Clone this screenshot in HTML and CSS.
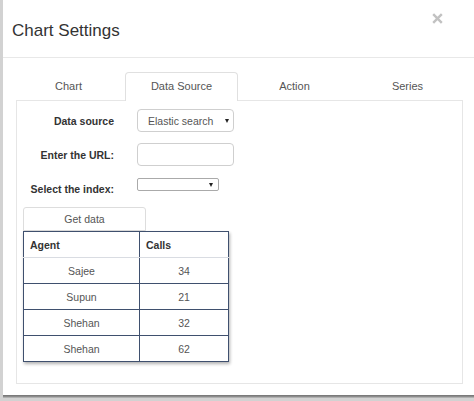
FILE: index.html
```html
<!DOCTYPE html>
<html lang="en">
<head>
<meta charset="utf-8">
<title>Chart Settings</title>
<link rel="stylesheet" href="styles.css">
</head>
<body>
<div class="modal">
  <div class="modal-header">
    <h4 class="title">Chart Settings</h4>
    <button class="close" aria-label="Close">
      <svg width="11" height="11" viewBox="0 0 11 11"><path d="M1.2 1.2 L9.8 9.8 M9.8 1.2 L1.2 9.8" stroke="#c2c2c2" stroke-width="2.4" stroke-linecap="butt"/></svg>
    </button>
  </div>
  <div class="modal-body">
    <ul class="tabs">
      <li class="tab">Chart</li>
      <li class="tab active">Data Source</li>
      <li class="tab">Action</li>
      <li class="tab">Series</li>
    </ul>
    <div class="panel">
      <div class="form">
        <label class="lbl">Data source</label>
        <div class="sel sel-lg"><span class="sel-text">Elastic search</span><span class="caret"></span></div>
        <label class="lbl">Enter the URL:</label>
        <input class="input" type="text">
        <label class="lbl lbl-low">Select the index:</label>
        <div class="sel sel-sm"><span class="sel-text"></span><span class="caret"></span></div>
      </div>
      <button class="btn">Get data</button>
      <table class="grid">
        <thead>
          <tr><th class="c1">Agent</th><th class="c2">Calls</th></tr>
        </thead>
        <tbody>
          <tr><td>Sajee</td><td>34</td></tr>
          <tr><td>Supun</td><td>21</td></tr>
          <tr><td>Shehan</td><td>32</td></tr>
          <tr><td>Shehan</td><td>62</td></tr>
        </tbody>
      </table>
    </div>
  </div>
</div>
</body>
</html>
```
FILE: styles.css
```css
html, body {
  margin: 0;
  padding: 0;
  height: 100%;
}
body {
  background: #d2d2d2;
  font-family: "Liberation Sans", Arial, sans-serif;
  overflow: hidden;
}
.modal {
  margin-left: 3px;
  width: 471px;
  height: 395px;
  background: #fff;
  box-shadow: 0 1px 0 #7a7a7a, 0 2px 0 #8c8c8c, 0 3px 0 #b0b0b0;
}
.modal-header {
  display: flex;
  justify-content: space-between;
  align-items: flex-start;
  height: 58px;
  box-sizing: border-box;
  border-bottom: 1px solid #e8e8e8;
}
.title {
  margin: 0;
  padding: 21px 0 0 9px;
  font-size: 17px;
  line-height: 20px;
  font-weight: normal;
  color: #333;
}
.close {
  margin: 13px 31px 0 0;
  padding: 0;
  width: 11px;
  height: 11px;
  border: none;
  background: none;
  display: block;
}
.close svg { display: block; }
.modal-body {
  padding: 14px 11px 0 13px;
}
.tabs {
  display: flex;
  list-style: none;
  margin: 0 -1px 0 -4px;
  padding: 0;
  height: 28px;
}
.tab {
  flex: 1;
  box-sizing: border-box;
  height: 28px;
  border: 1px solid transparent;
  border-bottom: none;
  border-radius: 4px 4px 0 0;
  text-align: center;
  font-size: 11px;
  line-height: 27px;
  color: #555;
}
.tab.active {
  height: 29px;
  margin-bottom: -1px;
  border-color: #e0e0e0;
  background: #fff;
  position: relative;
  z-index: 1;
}
.panel {
  box-sizing: border-box;
  height: 284px;
  border: 1px solid #e6e6e6;
  padding: 8px 0 0 6px;
}
.form {
  display: grid;
  grid-template-columns: 91px 97px;
  column-gap: 23px;
  row-gap: 11px;
  align-items: center;
}
.lbl {
  text-align: right;
  font-weight: bold;
  font-size: 10.5px;
  line-height: 12px;
  color: #333;
}
.lbl-low {
  align-self: start;
  margin-top: 6px;
}
.sel {
  box-sizing: border-box;
  display: flex;
  align-items: center;
  justify-content: space-between;
  background: #fff;
}
.sel-lg {
  height: 23px;
  border: 1px solid #cfcfcf;
  border-radius: 4px;
  padding: 0 4px 0 10px;
}
.sel-sm {
  width: 82px;
  height: 13px;
  margin-top: 1px;
  align-self: start;
  border: 1px solid #aaa;
  border-radius: 2px;
  padding: 0 5px 0 4px;
}
.sel-text {
  font-size: 10.5px;
  color: #555;
}
.caret {
  width: 0;
  height: 0;
  border-left: 2.5px solid transparent;
  border-right: 2.5px solid transparent;
  border-top: 4px solid #222;
}
.input {
  box-sizing: border-box;
  width: 97px;
  height: 23px;
  margin: 0;
  border: 1px solid #cfcfcf;
  border-radius: 4px;
  padding: 0 6px;
}
.btn {
  display: block;
  box-sizing: border-box;
  margin: 12px 0 0 0;
  width: 123px;
  height: 24px;
  border: 1px solid #ddd;
  border-radius: 3px 3px 0 0;
  background: #fff;
  color: #555;
  font-family: inherit;
  font-size: 10.5px;
  padding: 0;
}
.grid {
  border-collapse: collapse;
  width: 206px;
  border: 1px solid #3f506e;
  box-shadow: 1px 2px 3px rgba(0, 0, 0, 0.3);
  font-size: 10.5px;
}
.grid th, .grid td {
  height: 25px;
  padding: 0;
  border: 1px solid #3f506e;
}
.grid th {
  text-align: left;
  padding-left: 6px;
  font-weight: bold;
  color: #333;
  border-bottom: 1px solid #d9dce2;
}
.grid .c1 { width: 109px; }
.grid td {
  text-align: center;
  color: #555;
}
```
